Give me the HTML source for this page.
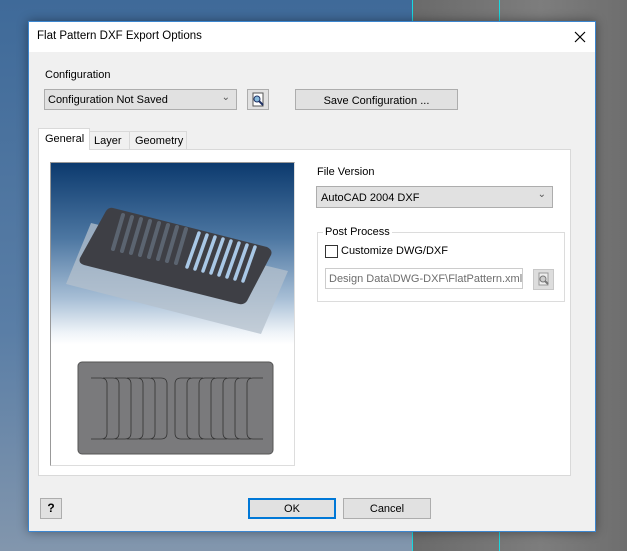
<!DOCTYPE html>
<html><head><style>
*{box-sizing:border-box;margin:0;padding:0}
body{width:627px;height:551px;overflow:hidden;position:relative;font-family:"Liberation Sans",sans-serif;font-size:11px;color:#000;background:linear-gradient(180deg,#3f6a99 0%,#5a7ea6 60%,#8296ad 100%)}
.a{position:absolute}
.btn{position:absolute;background:#e1e1e1;border:1px solid #adadad;text-align:center}
</style></head><body>
<div class="a" style="left:412px;top:0;width:215px;height:551px;background:linear-gradient(90deg,#6a6a6a,#7d7d7d 60%,#6e6e6e)"></div>
<div class="a" style="left:412px;top:0;width:1px;height:551px;background:#18d8e0"></div>
<div class="a" style="left:499px;top:0;width:1px;height:551px;background:#18d8e0"></div>
<div class="a" style="left:28px;top:21px;width:568px;height:511px;background:#f0f0f0;border:1px solid #3c86cf;box-shadow:0 0 10px rgba(0,0,0,.4)">
<div class="a" style="left:0;top:0;width:566px;height:30px;background:#fff"></div>
<div class="a" style="left:8px;top:8px;font-size:11.5px">Flat Pattern DXF Export Options</div>
<svg class="a" style="left:545px;top:9px" width="12" height="12"><path d="M1 1L11 11M11 1L1 11" stroke="#000" stroke-width="1.2"/></svg>
</div>
<div class="a" style="left:45px;top:69px">Configuration</div>
<div class="btn" style="left:44px;top:89px;width:193px;height:21px;text-align:left;padding:4px 3px">Configuration Not Saved<span style="position:absolute;right:6px;top:2px;color:#555;font-size:10px">&#8964;</span></div>
<div class="btn" style="left:247px;top:89px;width:22px;height:21px"><svg width="20" height="19"><rect x="5" y="3" width="10" height="13" fill="#fff" stroke="#555"/><circle cx="9" cy="9" r="3" fill="#8bd" stroke="#236"/><path d="M11 11L15 15" stroke="#236" stroke-width="2"/></svg></div>
<div class="btn" style="left:295px;top:89px;width:163px;height:21px;padding-top:5px">Save Configuration ...</div>
<div class="a" style="left:38px;top:149px;width:533px;height:327px;background:#fff;border:1px solid #d9d9d9"></div>
<div class="a" style="left:38px;top:128px;width:52px;height:22px;background:#fff;border:1px solid #d9d9d9;border-bottom:none;padding:4px 6px">General</div>
<div class="a" style="left:89px;top:131px;width:41px;height:18px;border:1px solid #d9d9d9;border-bottom:none;padding:3px 4px">Layer</div>
<div class="a" style="left:129px;top:131px;width:58px;height:18px;border:1px solid #d9d9d9;border-bottom:none;padding:3px 5px">Geometry</div>
<div class="a" style="left:50px;top:162px;width:245px;height:304px;border:1px solid #999;border-right-color:#ddd;border-bottom-color:#ddd;background:linear-gradient(180deg,#0c3a6e 0%,#4d77a2 25%,#a8bfd6 45%,#eef3f8 56%,#fff 60%,#fff 100%)">
<svg width="243" height="302" class="a" style="left:0;top:0">
<path d="M40 60L237 108L210 171L15 121Z" fill="#b4c0cc" opacity=".75"/>
<path d="M62 45L216 84Q222 87 220 92L196 138Q193 142 188 141L33 102Q27 100 29 95L55 48Q58 44 62 45Z" fill="#3e3f45"/>
<g stroke="#5b6470" stroke-width="4" stroke-linecap="round">
<path d="M72 52L62 86M81 54L71 88M90 56L80 90M99 58L89 92M108 60L98 94M117 62L107 96M126 64L116 98M135 66L125 100"/>
</g>
<g stroke="#a9c8e6" stroke-width="3.5" stroke-linecap="round">
<path d="M148 70L136 104M156 72L144 106M164 74L152 108M172 76L160 110M180 78L168 112M188 80L176 114M196 82L184 116M204 84L192 118"/>
</g>
<rect x="27" y="199" width="195" height="92" rx="4" fill="#7a7a7c" stroke="#555"/>
<g fill="none" stroke="#333" stroke-width=".8">
<path d="M40 215h10q6 0 6 6v49q0 6-6 6h-10M52 215h10q6 0 6 6v49q0 6-6 6h-10M64 215h10q6 0 6 6v49q0 6-6 6h-10M76 215h10q6 0 6 6v49q0 6-6 6h-10M88 215h10q6 0 6 6v49q0 6-6 6h-10M100 215h10q6 0 6 6v49q0 6-6 6h-10"/>
<path d="M212 215h-10q-6 0-6 6v49q0 6 6 6h10M200 215h-10q-6 0-6 6v49q0 6 6 6h10M188 215h-10q-6 0-6 6v49q0 6 6 6h10M176 215h-10q-6 0-6 6v49q0 6 6 6h10M164 215h-10q-6 0-6 6v49q0 6 6 6h10M152 215h-10q-6 0-6 6v49q0 6 6 6h10M140 215h-10q-6 0-6 6v49q0 6 6 6h10"/>
</g></svg></div>
<div class="a" style="left:317px;top:166px">File Version</div>
<div class="btn" style="left:316px;top:186px;width:237px;height:22px;text-align:left;padding:5px 4px">AutoCAD 2004 DXF<span style="position:absolute;right:6px;top:2px;color:#555;font-size:10px">&#8964;</span></div>
<div class="a" style="left:317px;top:232px;width:248px;height:70px;border:1px solid #dcdcdc"></div>
<div class="a" style="left:323px;top:226px;background:#fff;padding:0 2px">Post Process</div>
<div class="a" style="left:325px;top:245px;width:13px;height:13px;border:1px solid #333;background:#fff"></div>
<div class="a" style="left:341px;top:245px">Customize DWG/DXF</div>
<div class="a" style="left:325px;top:268px;width:198px;height:21px;border:1px solid #ccc;padding:4px 3px;color:#6d6d6d;white-space:nowrap;overflow:hidden">Design Data\DWG-DXF\FlatPattern.xml</div>
<div class="btn" style="left:533px;top:269px;width:21px;height:21px;background:#ddd;border-color:#c8c8c8"><svg width="19" height="19"><rect x="5" y="3" width="9" height="12" fill="#eee" stroke="#999"/><circle cx="9" cy="9" r="3" fill="#ccc" stroke="#777"/><path d="M11 11L14 14" stroke="#777" stroke-width="2"/></svg></div>
<div class="btn" style="left:40px;top:498px;width:22px;height:21px;padding-top:2px;font-weight:bold;font-size:12px">?</div>
<div class="btn" style="left:248px;top:498px;width:88px;height:21px;border:2px solid #0078d7;padding-top:3px">OK</div>
<div class="btn" style="left:343px;top:498px;width:88px;height:21px;padding-top:4px">Cancel</div>
</body></html>
